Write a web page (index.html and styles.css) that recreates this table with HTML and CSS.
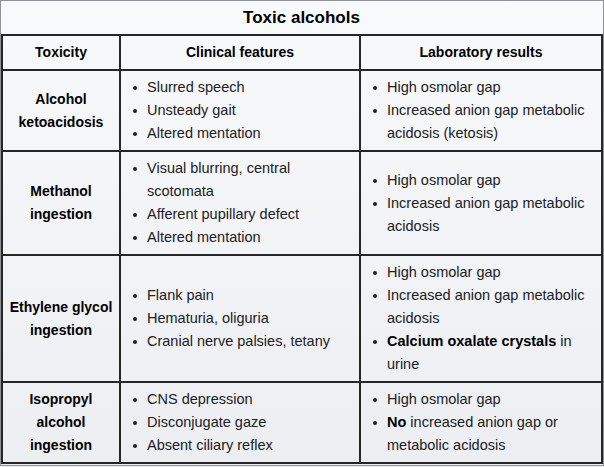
FILE: index.html
```html
<!DOCTYPE html>
<html lang="en">
<head>
<meta charset="utf-8">
<title>Toxic alcohols</title>
<link rel="stylesheet" href="styles.css">
</head>
<body>
<div class="wrap">
  <div class="title">Toxic alcohols</div>
  <table class="tox">
    <colgroup>
      <col class="c1"><col class="c2"><col class="c3">
    </colgroup>
    <thead>
      <tr><th>Toxicity</th><th>Clinical features</th><th>Laboratory results</th></tr>
    </thead>
    <tbody>
      <tr>
        <th>Alcohol<br>ketoacidosis</th>
        <td><ul><li>Slurred speech</li><li>Unsteady gait</li><li>Altered mentation</li></ul></td>
        <td><ul><li>High osmolar gap</li><li>Increased anion gap metabolic acidosis (ketosis)</li></ul></td>
      </tr>
      <tr>
        <th>Methanol<br>ingestion</th>
        <td><ul><li>Visual blurring, central scotomata</li><li>Afferent pupillary defect</li><li>Altered mentation</li></ul></td>
        <td><ul><li>High osmolar gap</li><li>Increased anion gap metabolic acidosis</li></ul></td>
      </tr>
      <tr>
        <th>Ethylene glycol<br>ingestion</th>
        <td><ul><li>Flank pain</li><li>Hematuria, oliguria</li><li>Cranial nerve palsies, tetany</li></ul></td>
        <td><ul><li>High osmolar gap</li><li>Increased anion gap metabolic acidosis</li><li><b>Calcium oxalate crystals</b> in urine</li></ul></td>
      </tr>
      <tr>
        <th>Isopropyl<br>alcohol<br>ingestion</th>
        <td><ul><li>CNS depression</li><li>Disconjugate gaze</li><li>Absent ciliary reflex</li></ul></td>
        <td><ul><li>High osmolar gap</li><li><b>No</b> increased anion gap or metabolic acidosis</li></ul></td>
      </tr>
    </tbody>
  </table>
</div>
</body>
</html>
```
FILE: styles.css
```css
html, body {
  margin: 0;
  padding: 0;
  background: #f0f0f1;
}
body {
  font-family: "Liberation Sans", Arial, sans-serif;
  font-size: 14px;
  color: #202122;
}
.wrap {
  width: 601px;
  border: 1px solid #8f9296;
  padding: 0 1px 1px 0;
  background: linear-gradient(#f8f9fa, #eceef2);
}
.title {
  height: 33px;
  line-height: 33px;
  text-align: center;
  font-weight: bold;
  font-size: 17px;
  color: #000;
}
.tox {
  border-collapse: collapse;
  table-layout: fixed;
  width: 600px;
}
.c1 { width: 118px; }
.c2 { width: 240px; }
.c3 { width: 242px; }
.tox th, .tox td {
  border: 2px solid #262626;
  padding: 5px 8px;
  line-height: 23px;
  vertical-align: middle;
}
.tox th {
  font-weight: bold;
  color: #000;
  text-align: center;
  padding: 5px 2px;
  white-space: nowrap;
}
.tox td {
  font-size: 14.5px;
  padding-left: 9px;
  padding-right: 5px;
}
.tox ul {
  list-style: none;
  margin: 0;
  padding: 0 0 0 17px;
}
.tox li {
  position: relative;
}
.tox li::before {
  content: "";
  position: absolute;
  left: -14px;
  top: 10px;
  width: 4px;
  height: 4px;
  border-radius: 50%;
  background: #202122;
}
.tox b {
  color: #000;
}
```
